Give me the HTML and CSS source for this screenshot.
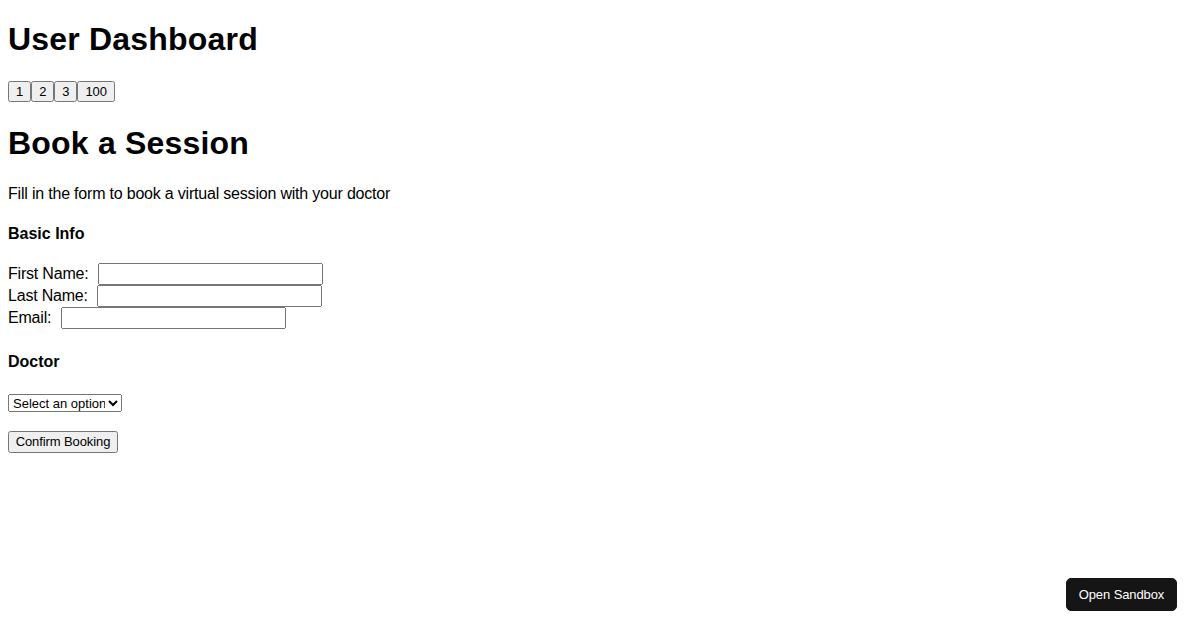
FILE: index.html
```html
<!DOCTYPE html>
<html>
<head>
<meta charset="utf-8">
<link rel="stylesheet" href="styles.css">
</head>
<body>
<h1 class="title">User Dashboard</h1>
<div class="pages"><button class="btn">1</button><button class="btn">2</button><button class="btn">3</button><button class="btn">100</button></div>
<h1 class="title second">Book a Session</h1>
<p class="intro">Fill in the form to book a virtual session with your doctor</p>
<form class="booking">
<h4 class="section">Basic Info</h4>
<div class="row"><label class="lbl">First Name: </label><input class="field" type="text"></div>
<div class="row"><label class="lbl">Last Name: </label><input class="field" type="text"></div>
<div class="row"><label class="lbl">Email: </label><input class="field" type="email"></div>
<h4 class="section doctor">Doctor</h4>
<select class="picker"><option>Select an option</option></select>
<p class="actions"><button class="btn confirm" type="button">Confirm Booking</button></p>
</form>
<button class="sandbox">Open Sandbox</button>
</body>
</html>
```
FILE: styles.css
```css
html, body {
  margin: 0;
  padding: 0;
}
body {
  padding: 0 8px;
  font-family: "Liberation Sans", Arial, sans-serif;
  font-size: 16px;
  color: #000;
  background: #fff;
}
.title {
  font-size: 32px;
  margin: 21.44px 0;
  letter-spacing: 0.2px;
}
.title.second {
  margin-top: 23.44px;
  margin-bottom: 22.44px;
}
.pages {
  display: flex;
  height: 21px;
  padding-top: 1px;
}
.btn {
  font-family: "Liberation Sans", Arial, sans-serif;
  font-size: 13px;
  height: 21px;
  padding: 1px 6px;
  box-sizing: border-box;
  letter-spacing: -0.1px;
}
.intro {
  margin: 16px 0;
  letter-spacing: -0.2px;
}
.section {
  font-size: 16px;
  margin: 22.28px 0 20.28px;
}
.section.doctor {
  margin: 23.28px 0 21.28px;
}
.row {
  display: flex;
  align-items: center;
  height: 22px;
}
.lbl {
  letter-spacing: -0.2px;
  margin-right: 5px;
  white-space: pre;
}
.field {
  width: 225px;
  height: 22px;
  box-sizing: border-box;
  margin: 0;
  font-family: "Liberation Sans", Arial, sans-serif;
  font-size: 13px;
}
.picker {
  width: 114px;
  height: 18px;
  box-sizing: border-box;
  font-family: "Liberation Sans", Arial, sans-serif;
  font-size: 13px;
  margin-top: 2px;
}
.actions {
  margin: 19px 0 16px;
}
.confirm {
  width: 110px;
  height: 22px;
  padding: 1px 4px;
}
.sandbox {
  position: fixed;
  right: 23px;
  bottom: 19px;
  width: 111px;
  height: 33px;
  background: #151515;
  color: #fff;
  border: 1px solid #151515;
  border-radius: 5px;
  padding: 0;
  font-family: "Liberation Sans", Arial, sans-serif;
  font-size: 13px;
  letter-spacing: -0.1px;
}
```
